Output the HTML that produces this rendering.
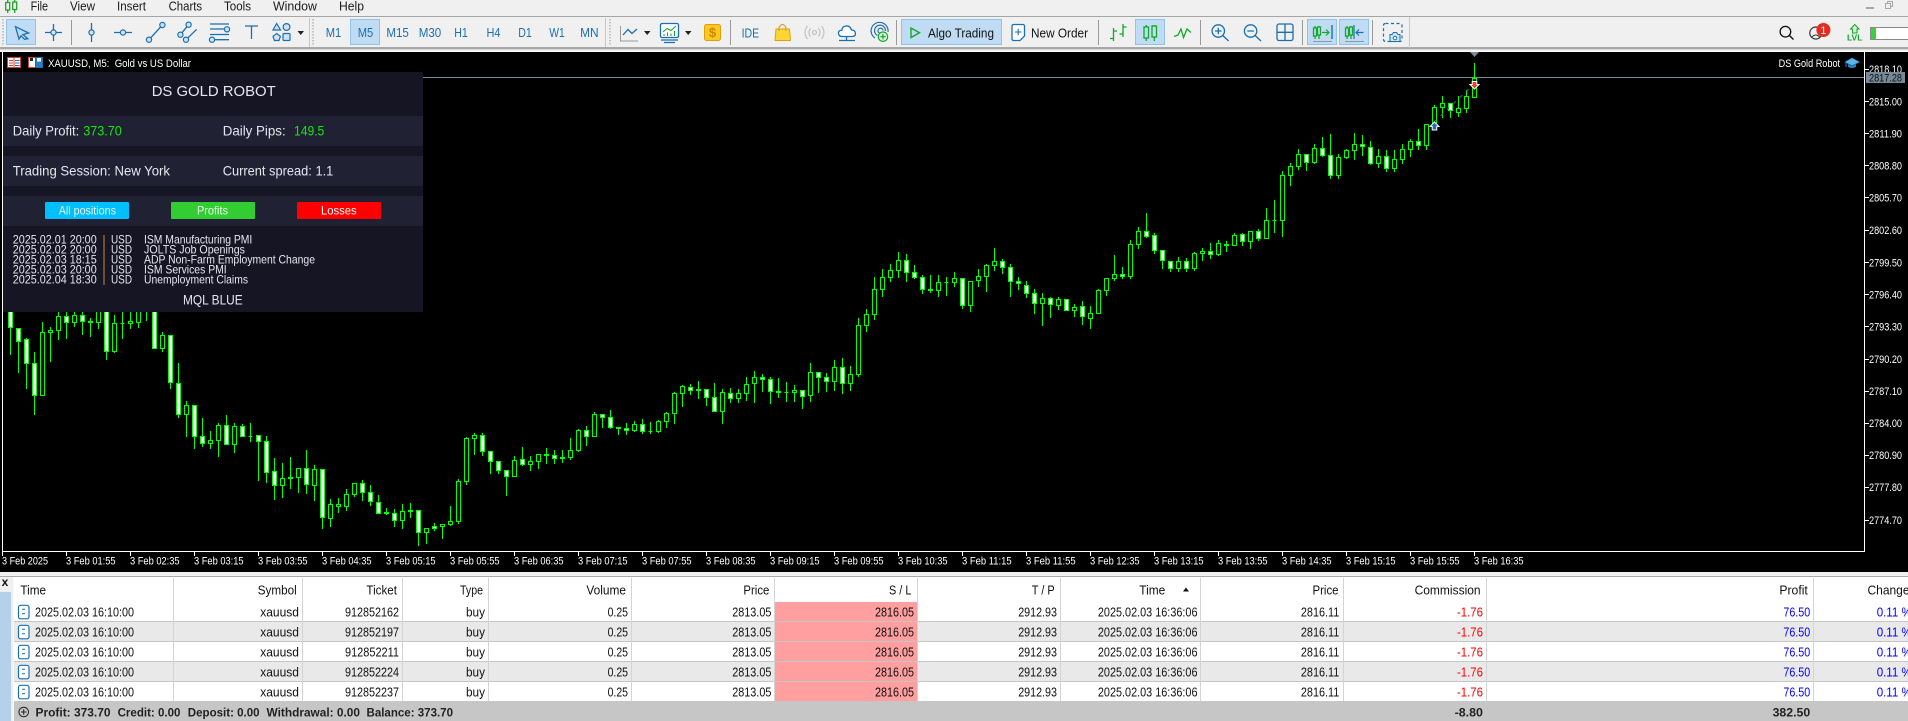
<!DOCTYPE html>
<html><head><meta charset="utf-8"><title>XAUUSD M5</title>
<style>
html,body{margin:0;padding:0;background:#f0f0f0;width:1908px;height:721px;overflow:hidden}
svg{display:block;font-family:"Liberation Sans",sans-serif}
text{white-space:pre}
.m{font-size:13px;fill:#1b6fb0;text-anchor:middle}
.p{font-size:11px;fill:#fff}
.t{font-size:11px;fill:#fff}
.w{font-size:14px;fill:#e6e6f0}
.n{font-size:12px;fill:#e6e6f0}
.c{font-size:13px;fill:#111;text-anchor:end}
.b{font-size:12px;fill:#222;font-weight:700}
.i{fill:none;stroke:#1b6fb0;stroke-width:1.3}
.d{fill:#cfe3f5;stroke:#1b6fb0;stroke-width:1.2}
.g{fill:none;stroke:#12a82a;stroke-width:1.3}
</style></head><body>
<svg width="1908" height="721" viewBox="0 0 1908 721" xmlns="http://www.w3.org/2000/svg">
<rect width="1908" height="721" fill="#f0f0f0"/>
<!-- menu -->
<g fill="none" stroke="#1fa52b" stroke-width="1.3"><path d="M7.7 0V13M14.7 0V13"/><rect x="5.7" y="2.5" width="4" height="7.5" fill="#f0f0f0"/><rect x="12.7" y="2" width="4" height="7.5" fill="#f0f0f0"/></g>
<g font-size="12.5" fill="#1a1a1a">
<text x="30.6" y="10.5" textLength="17.5" lengthAdjust="spacingAndGlyphs">File</text>
<text x="70" y="10.5" textLength="25" lengthAdjust="spacingAndGlyphs">View</text>
<text x="117" y="10.5" textLength="29" lengthAdjust="spacingAndGlyphs">Insert</text>
<text x="168.6" y="10.5" textLength="33.5" lengthAdjust="spacingAndGlyphs">Charts</text>
<text x="224" y="10.5" textLength="27" lengthAdjust="spacingAndGlyphs">Tools</text>
<text x="273" y="10.5" textLength="44" lengthAdjust="spacingAndGlyphs">Window</text>
<text x="339" y="10.5" textLength="25" lengthAdjust="spacingAndGlyphs">Help</text>
</g>
<path d="M1866 8h8" stroke="#a8a8a8" stroke-width="2"/>
<path d="M1885.5 3.5h5v5h-5zM1887.5 3V1.5h5v5H1891" fill="none" stroke="#a8a8a8"/>
<rect y="16" width="1908" height="1" fill="#a6a6a6"/>
<rect y="47" width="1908" height="2" fill="#a8a8a8"/>
<rect y="49" width="1908" height="1" fill="#d8d8d8"/>
<!-- toolbar grips & separators -->
<g stroke="#c4c4c4" stroke-dasharray="1.5 1.5" stroke-width="2" fill="none"><path d="M3 19V46M313 19V46M610 19V46"/></g>
<g fill="#9a9a9a"><rect x="71" y="20" width="1" height="25"/><rect x="309" y="18" width="1" height="29" fill="#c8c8c8"/><rect x="605" y="18" width="1" height="29" fill="#c8c8c8"/><rect x="730" y="20" width="1" height="25"/><rect x="896" y="20" width="1" height="25"/><rect x="1098" y="20" width="1" height="25"/><rect x="1200" y="20" width="1" height="25"/><rect x="1302" y="20" width="1" height="25"/><rect x="1372" y="20" width="1" height="25"/><rect x="1409" y="17" width="1" height="31" fill="#c8c8c8"/></g>
<!-- selected buttons -->
<g fill="#bfdcf4" stroke="#90c4ee"><rect x="6.5" y="19.5" width="29" height="25"/><rect x="350.5" y="19.5" width="29" height="25"/><rect x="901.5" y="19.5" width="100" height="25"/><rect x="1135.5" y="19.5" width="29" height="25"/><rect x="1307.5" y="19.5" width="29" height="25"/><rect x="1339.5" y="19.5" width="29" height="25"/></g>
<!-- drawing tools -->
<path d="M15.5 26.7L28.6 33L23 34.6L27.8 38.7L24.6 39.3L21 35.8L19 39Z" class="i" fill="none"/>
<path d="M45 32.5H62M53.5 24V41" class="i"/><circle cx="53.5" cy="32.5" r="2.6" class="d"/>
<path d="M91.5 23V42" class="i"/><circle cx="91.5" cy="32.5" r="2.6" class="d"/>
<path d="M114 32.5H132" class="i"/><circle cx="123" cy="32.5" r="2.6" class="d"/>
<path d="M149 39.7L162.4 25" class="i"/><circle cx="149" cy="39.7" r="2.6" class="d"/><circle cx="162.4" cy="25" r="2.6" class="d"/>
<path d="M180.4 34.7L188.6 24.7M186 39.7L196.7 29.3" class="i"/><circle cx="180.4" cy="34.7" r="2.6" class="d"/><circle cx="188.6" cy="24.7" r="2.6" class="d"/><circle cx="186" cy="39.7" r="2.6" class="d"/>
<path d="M210 24H229M210 29H226M210 34.5H229M214 39.7H229" class="i"/><circle cx="227" cy="29.3" r="2.6" class="d"/><circle cx="212" cy="39.7" r="2.6" class="d"/>
<path d="M245 26H258M251.5 26V39" class="i"/>
<path d="M276.7 23.5L280.5 30H273Z" class="d"/><circle cx="286.5" cy="27" r="3.4" class="d"/><path d="M276.7 33.5L280.4 36.3L279 40.5H274.4L273 36.3Z" class="d"/><rect x="283" y="33.5" width="7" height="7" rx="1" class="d"/>
<path d="M297.5 31H304L300.8 35Z" fill="#222"/>
<!-- timeframes -->
<text class="m" x="333.5" y="37" textLength="15.5" lengthAdjust="spacingAndGlyphs">M1</text>
<text class="m" x="365.5" y="37" textLength="15.5" lengthAdjust="spacingAndGlyphs">M5</text>
<text class="m" x="397.6" y="37" textLength="22.5" lengthAdjust="spacingAndGlyphs">M15</text>
<text class="m" x="430" y="37" textLength="22.5" lengthAdjust="spacingAndGlyphs">M30</text>
<text class="m" x="461" y="37" textLength="13.5" lengthAdjust="spacingAndGlyphs">H1</text>
<text class="m" x="493.5" y="37" textLength="14" lengthAdjust="spacingAndGlyphs">H4</text>
<text class="m" x="525" y="37" textLength="13.5" lengthAdjust="spacingAndGlyphs">D1</text>
<text class="m" x="557" y="37" textLength="15.5" lengthAdjust="spacingAndGlyphs">W1</text>
<text class="m" x="589.4" y="37" textLength="18.5" lengthAdjust="spacingAndGlyphs">MN</text>
<!-- chart type icons -->
<path d="M620.5 26V41H638" fill="none" stroke="#9a9a9a"/><path d="M623 35L628 29.5L632 33.5L637 29" class="i"/>
<path d="M644 31H650.5L647.2 35Z" fill="#222"/>
<rect x="660.5" y="23.5" width="18" height="14" rx="1.5" fill="#fff" stroke="#1b6fb0" stroke-width="1.3"/>
<path d="M663 32L667 28.5L671 30.5L676 26" fill="none" stroke="#12a82a"/><path d="M664 36V34M667.5 36V32.5M671 36V33.5M674.5 36V31" stroke="#12a82a"/>
<path d="M661 40H678M664 42.5H675" stroke="#1b6fb0" stroke-width="1.2"/>
<path d="M685 31H691.5L688.2 35Z" fill="#222"/>
<rect x="704.5" y="24.5" width="16" height="16" rx="2" fill="#ffc81e" stroke="#dd9f10"/>
<text x="712.5" y="37" font-size="13" font-weight="700" fill="#c98a00" text-anchor="middle">$</text>
<text x="741.6" y="37.4" font-size="13" fill="#1b6fb0" textLength="17.5" lengthAdjust="spacingAndGlyphs">IDE</text>
<path d="M776 29H789.5L790.5 40.5H775Z" fill="#ffd633" stroke="#d9a020"/><path d="M779 31V27.5Q782.5 21.5 786 27.5V31" fill="none" stroke="#d9a020" stroke-width="1.2"/>
<g fill="none" stroke="#c2c2c2" stroke-width="1.2"><circle cx="814.5" cy="32.5" r="2"/><path d="M810.5 28.5a6 6 0 0 0 0 8M818.5 28.5a6 6 0 0 1 0 8M807.5 26a10 10 0 0 0 0 13M821.5 26a10 10 0 0 1 0 13"/></g>
<path d="M842 36.5H852Q856 36.5 855.3 33Q855 30 851.5 30Q850 25.5 846 26Q842 26.5 842 30Q838 30.5 838.5 33.5Q839 36.5 842 36.5ZM846.5 36.5V40.5M839 40.5H855" fill="#fff" stroke="#1b6fb0" stroke-width="1.3"/>
<g fill="none" stroke="#1b6fb0" stroke-width="1.2"><path d="M875 38a8.5 8.5 0 1 1 13-6M877.5 35.5a5.5 5.5 0 1 1 8-4.5M879.5 33a2.5 2.5 0 1 1 3.5-2.5"/></g>
<circle cx="883" cy="36.7" r="4.7" fill="#d9f4dd" stroke="#12a82a" stroke-width="1.2"/><path d="M880.3 36.7H885.7M883 34V39.4" stroke="#12a82a" stroke-width="1.2"/>
<!-- algo / new order -->
<path d="M911 28V37.5L919.5 32.7Z" fill="none" stroke="#12a82a" stroke-width="1.4"/>
<text x="928" y="37.3" font-size="13" fill="#111" textLength="66" lengthAdjust="spacingAndGlyphs">Algo Trading</text>
<path d="M1012 26a1.5 1.5 0 0 1 1.5-1.5H1023a1.5 1.5 0 0 1 1.5 1.5V36L1020 40.5H1013.5a1.5 1.5 0 0 1-1.5-1.5Z" fill="#fff" stroke="#1b6fb0" stroke-width="1.3"/>
<path d="M1015 32H1021.5M1018.2 28.8V35.2" stroke="#1b6fb0" stroke-width="1.1"/>
<text x="1031" y="37.3" font-size="13" fill="#111" textLength="57" lengthAdjust="spacingAndGlyphs">New Order</text>
<!-- chart mode -->
<path d="M1113.5 28V41M1110 38.5H1113.5M1113.5 31H1117M1123 24V37M1119.5 34H1123M1123 27H1126.5" class="g"/>
<path d="M1146.2 25V41M1154.3 25V41" class="g"/><rect x="1144" y="27" width="4.5" height="11" fill="#bfdcf4" class="g" style="fill:#bfdcf4"/><rect x="1152" y="26" width="4.5" height="11" class="g" style="fill:#bfdcf4"/>
<path d="M1174 36.5L1178 35L1181 29L1183.5 37.5L1187 29L1191 32.5" class="g"/>
<!-- zoom, grid -->
<circle cx="1218.3" cy="31" r="6.2" class="i"/><path d="M1222.8 35.5L1228.6 41M1215 31H1221.6M1218.3 27.7V34.3" class="i"/>
<circle cx="1250.6" cy="31" r="6.2" class="i"/><path d="M1255.1 35.5L1261 41M1247.3 31H1253.9" class="i"/>
<rect x="1277" y="24" width="16" height="16.5" rx="2" class="i"/><path d="M1285 24V40.5M1277 32.3H1293" class="i"/>
<!-- shift buttons -->
<path d="M1315 26V39M1319 26V39" class="g"/><rect x="1313.5" y="28" width="3" height="8" class="g" style="fill:#bfdcf4"/><rect x="1317.5" y="27" width="3" height="8" class="g" style="fill:#bfdcf4"/>
<path d="M1322 32.5H1329M1326 29.5L1329 32.5L1326 35.5" fill="none" stroke="#12a82a" stroke-width="1.2"/><path d="M1332 25V39" stroke="#1b6fb0" stroke-width="1.4"/><path d="M1313 41.5H1332" stroke="#8a9aa8"/>
<path d="M1347 26V39M1351 26V39" class="g"/><rect x="1345.5" y="28" width="3" height="8" class="g" style="fill:#bfdcf4"/><rect x="1349.5" y="27" width="3" height="8" class="g" style="fill:#bfdcf4"/>
<path d="M1354 25V39" stroke="#1b6fb0" stroke-width="1.2"/><path d="M1356 32.5H1363.5M1359 29.5L1356 32.5L1359 35.5" fill="none" stroke="#1b6fb0" stroke-width="1.2"/><path d="M1345 41.5H1364" stroke="#8a9aa8"/>
<!-- screenshot -->
<rect x="1383.5" y="23.5" width="18.5" height="18" rx="2" fill="none" stroke="#1b6fb0" stroke-width="1.2" stroke-dasharray="3 2.5"/>
<path d="M1390 34.5h2l1.5-2h3l1.5 2h2v7h-10z" fill="#d3e6f5" stroke="#1b6fb0"/><circle cx="1395" cy="38" r="1.8" fill="#fff" stroke="#1b6fb0"/>
<!-- right status -->
<circle cx="1785.4" cy="31.7" r="5.3" fill="none" stroke="#111" stroke-width="1.3"/><path d="M1789.4 35.5L1793.5 39.5" stroke="#111" stroke-width="1.4"/>
<circle cx="1815.8" cy="33" r="6" fill="none" stroke="#333" stroke-width="1.2"/><path d="M1811.5 37.5Q1815.8 32.5 1820 37.5" fill="none" stroke="#333"/>
<circle cx="1823.4" cy="30" r="7" fill="#e62a1e"/><text x="1823.4" y="34" font-size="11" fill="#fff" text-anchor="middle">1</text>
<path d="M1854.7 24.5L1859 29H1857V33H1852.5V29H1850.5Z" fill="#d0f0d0" stroke="#12a82a"/>
<text x="1854.7" y="40.5" font-size="8.5" fill="#12a82a" text-anchor="middle" font-weight="700">LVL</text>
<rect x="1870.5" y="27.5" width="40" height="12" fill="#fff" stroke="#8a8a8a"/><rect x="1871" y="28" width="5" height="11" fill="#3ecf3e"/>

<!-- chart -->
<rect y="51" width="1908" height="521" fill="#000"/>
<rect y="51" width="1908" height="1" fill="#fff"/>
<rect x="2" y="51" width="1" height="501" fill="#fff"/>
<rect x="2" y="551" width="1862" height="1" fill="#fff"/>
<rect x="1864" y="51" width="1" height="501" fill="#fff"/>
<rect x="3" y="77" width="1861" height="1" fill="#778899"/>
<path d="M1470 52H1479L1474.5 57Z" fill="#778899"/>
<!-- candles -->
<path fill="none" stroke="#0f0" stroke-width="1" d="M10.5 300V355M18.5 328V373M26.5 338V389M34.5 352V415M42.5 322V396M50.5 327V362M58.5 305V340M66.5 305V339M74.5 308V327M82.5 310V335M90.5 318V337M98.5 305V329M106.5 300V360M114.5 315V353M122.5 305V339M130.5 305V329M138.5 305V328M146.5 305V321M154.5 300V349M162.5 332V352M170.5 335V389M178.5 363V418M186.5 401V437M194.5 405V449M202.5 418V447M210.5 431V449M218.5 423V457M226.5 415V445M234.5 423V453M242.5 424V437M250.5 423V442M258.5 435V481M266.5 436V483M274.5 458V500M282.5 463V498M290.5 457V489M298.5 468V493M306.5 450V494M314.5 465V501M322.5 469V529M330.5 499V527M338.5 498V513M346.5 489V511M354.5 483V497M362.5 480V501M370.5 485V506M378.5 495V514M386.5 508V515M394.5 509V527M402.5 504V529M410.5 503V518M418.5 510V546M426.5 528V544M434.5 523V531M442.5 524V539M450.5 506V526M458.5 479V524M466.5 437V485M474.5 433V455M482.5 433V456M490.5 451V474M498.5 461V474M506.5 470V496M514.5 456V477M522.5 447V466M530.5 456V471M538.5 454V469M546.5 448V464M554.5 450V464M562.5 450V463M570.5 438V460M578.5 429V452M586.5 426V446M594.5 412V437M602.5 414V428M610.5 410V429M618.5 427V435M626.5 423V435M634.5 421V432M642.5 419V434M650.5 422V434M658.5 420V433M666.5 412V428M674.5 392V424M682.5 385V407M690.5 384V395M698.5 381V399M706.5 389V406M714.5 383V412M722.5 389V424M730.5 388V403M738.5 389V403M746.5 377V401M754.5 371V403M762.5 374V392M770.5 377V404M778.5 378V398M786.5 382V402M794.5 385V402M802.5 390V409M810.5 363V402M818.5 372V393M826.5 373V392M834.5 360V391M842.5 358V394M850.5 366V391M858.5 318V377M866.5 309V332M874.5 277V320M882.5 269V297M890.5 264V282M898.5 252V278M906.5 254V282M914.5 265V279M922.5 275V294M930.5 275V293M938.5 275V297M946.5 277V296M954.5 272V287M962.5 278V309M970.5 281V312M978.5 269V287M986.5 264V292M994.5 248V271M1002.5 259V274M1010.5 264V297M1018.5 277V290M1026.5 281V298M1034.5 289V314M1042.5 293V326M1050.5 297V318M1058.5 297V310M1066.5 299V311M1074.5 304V317M1082.5 301V325M1090.5 306V329M1098.5 289V314M1106.5 278V296M1114.5 255V281M1122.5 267V279M1130.5 240V279M1138.5 227V249M1146.5 213V238M1154.5 233V254M1162.5 250V269M1170.5 261V272M1178.5 257V272M1186.5 258V272M1194.5 252V271M1202.5 248V261M1210.5 243V259M1218.5 240V256M1226.5 241V252M1234.5 233V246M1242.5 233V246M1250.5 231V249M1258.5 229V241M1266.5 208V239M1274.5 200V233M1282.5 171V237M1290.5 163V186M1298.5 149V170M1306.5 154V171M1314.5 144V164M1322.5 137V157M1330.5 134V179M1338.5 154V179M1346.5 149V159M1354.5 133V160M1362.5 135V156M1370.5 141V165M1378.5 149V168M1386.5 150V172M1394.5 150V172M1402.5 144V164M1410.5 139V157M1418.5 129V150M1426.5 124V150M1434.5 105V125M1442.5 96V118M1450.5 103V118M1458.5 96V117M1466.5 90V113M1474.5 63V98"/>
<path fill="#000" stroke="#0f0" stroke-width="1" d="M40.5 332.5h4v63h-4zM48.5 330.5h4v2h-4zM56.5 316.5h4v14h-4zM72.5 315.5h4v7h-4zM88.5 321.5h4v1h-4zM96.5 305.5h4v17h-4zM112.5 323.5h4v28h-4zM120.5 323.5h4v0h-4zM128.5 321.5h4v2h-4zM136.5 305.5h4v17h-4zM160.5 335.5h4v13h-4zM184.5 405.5h4v9h-4zM208.5 440.5h4v3h-4zM216.5 425.5h4v15h-4zM232.5 426.5h4v18h-4zM248.5 436.5h4v0h-4zM280.5 478.5h4v7h-4zM288.5 477.5h4v1h-4zM296.5 468.5h4v9h-4zM312.5 469.5h4v16h-4zM328.5 504.5h4v14h-4zM336.5 504.5h4v2h-4zM344.5 494.5h4v12h-4zM352.5 483.5h4v11h-4zM384.5 512.5h4v1h-4zM400.5 511.5h4v9h-4zM408.5 510.5h4v1h-4zM424.5 528.5h4v4h-4zM440.5 524.5h4v2h-4zM448.5 521.5h4v3h-4zM456.5 481.5h4v40h-4zM464.5 438.5h4v43h-4zM472.5 435.5h4v3h-4zM512.5 460.5h4v16h-4zM528.5 461.5h4v3h-4zM536.5 454.5h4v7h-4zM544.5 454.5h4v1h-4zM560.5 457.5h4v1h-4zM568.5 450.5h4v7h-4zM576.5 430.5h4v20h-4zM592.5 414.5h4v22h-4zM616.5 427.5h4v1h-4zM632.5 424.5h4v6h-4zM648.5 431.5h4v0h-4zM656.5 421.5h4v10h-4zM664.5 413.5h4v8h-4zM672.5 393.5h4v20h-4zM680.5 386.5h4v7h-4zM696.5 389.5h4v1h-4zM720.5 392.5h4v19h-4zM736.5 393.5h4v5h-4zM744.5 384.5h4v9h-4zM752.5 377.5h4v6h-4zM776.5 391.5h4v1h-4zM784.5 392.5h4v0h-4zM792.5 390.5h4v2h-4zM808.5 372.5h4v23h-4zM832.5 367.5h4v14h-4zM848.5 374.5h4v9h-4zM856.5 325.5h4v49h-4zM864.5 314.5h4v11h-4zM872.5 289.5h4v25h-4zM880.5 277.5h4v12h-4zM888.5 270.5h4v7h-4zM896.5 260.5h4v10h-4zM928.5 289.5h4v1h-4zM936.5 282.5h4v8h-4zM944.5 282.5h4v0h-4zM952.5 278.5h4v4h-4zM968.5 281.5h4v24h-4zM976.5 276.5h4v4h-4zM984.5 265.5h4v11h-4zM992.5 261.5h4v4h-4zM1040.5 298.5h4v5h-4zM1056.5 299.5h4v6h-4zM1072.5 307.5h4v3h-4zM1088.5 313.5h4v5h-4zM1096.5 290.5h4v23h-4zM1104.5 278.5h4v12h-4zM1112.5 274.5h4v4h-4zM1128.5 244.5h4v32h-4zM1136.5 231.5h4v13h-4zM1176.5 261.5h4v7h-4zM1192.5 253.5h4v15h-4zM1200.5 251.5h4v2h-4zM1216.5 243.5h4v11h-4zM1224.5 244.5h4v1h-4zM1232.5 235.5h4v10h-4zM1248.5 231.5h4v10h-4zM1264.5 220.5h4v18h-4zM1272.5 220.5h4v0h-4zM1280.5 175.5h4v45h-4zM1288.5 166.5h4v9h-4zM1296.5 154.5h4v12h-4zM1312.5 148.5h4v14h-4zM1336.5 157.5h4v18h-4zM1344.5 150.5h4v7h-4zM1352.5 144.5h4v6h-4zM1376.5 156.5h4v7h-4zM1392.5 159.5h4v9h-4zM1400.5 149.5h4v10h-4zM1408.5 141.5h4v8h-4zM1424.5 124.5h4v21h-4zM1432.5 107.5h4v17h-4zM1440.5 103.5h4v4h-4zM1456.5 108.5h4v4h-4zM1464.5 96.5h4v12h-4zM1472.5 78.5h4v19h-4z"/>
<path fill="#fff" stroke="#0f0" stroke-width="1" d="M8.5 300.5h4v27h-4zM16.5 328.5h4v13h-4zM24.5 339.5h4v24h-4zM32.5 363.5h4v32h-4zM64.5 316.5h4v6h-4zM80.5 315.5h4v6h-4zM104.5 300.5h4v51h-4zM152.5 300.5h4v48h-4zM168.5 335.5h4v47h-4zM176.5 383.5h4v31h-4zM192.5 405.5h4v31h-4zM200.5 436.5h4v7h-4zM224.5 425.5h4v19h-4zM240.5 426.5h4v10h-4zM256.5 435.5h4v6h-4zM264.5 441.5h4v31h-4zM272.5 471.5h4v14h-4zM304.5 468.5h4v16h-4zM320.5 469.5h4v48h-4zM360.5 483.5h4v9h-4zM368.5 492.5h4v9h-4zM376.5 502.5h4v11h-4zM392.5 513.5h4v7h-4zM416.5 510.5h4v22h-4zM432.5 526.5h4v2h-4zM480.5 435.5h4v16h-4zM488.5 451.5h4v10h-4zM496.5 461.5h4v9h-4zM504.5 470.5h4v6h-4zM520.5 459.5h4v5h-4zM552.5 455.5h4v3h-4zM584.5 430.5h4v6h-4zM600.5 414.5h4v3h-4zM608.5 417.5h4v10h-4zM624.5 428.5h4v2h-4zM640.5 424.5h4v7h-4zM688.5 387.5h4v3h-4zM704.5 389.5h4v8h-4zM712.5 397.5h4v14h-4zM728.5 393.5h4v5h-4zM760.5 377.5h4v2h-4zM768.5 379.5h4v12h-4zM800.5 390.5h4v6h-4zM816.5 372.5h4v5h-4zM824.5 377.5h4v4h-4zM840.5 367.5h4v16h-4zM904.5 260.5h4v12h-4zM912.5 272.5h4v5h-4zM920.5 277.5h4v12h-4zM960.5 278.5h4v27h-4zM1000.5 261.5h4v6h-4zM1008.5 267.5h4v14h-4zM1016.5 281.5h4v2h-4zM1024.5 285.5h4v8h-4zM1032.5 293.5h4v10h-4zM1048.5 298.5h4v6h-4zM1064.5 299.5h4v11h-4zM1080.5 306.5h4v10h-4zM1120.5 274.5h4v2h-4zM1144.5 231.5h4v5h-4zM1152.5 235.5h4v15h-4zM1160.5 250.5h4v10h-4zM1168.5 261.5h4v7h-4zM1184.5 261.5h4v7h-4zM1208.5 251.5h4v3h-4zM1240.5 234.5h4v7h-4zM1256.5 231.5h4v7h-4zM1304.5 154.5h4v8h-4zM1320.5 148.5h4v7h-4zM1328.5 155.5h4v20h-4zM1360.5 144.5h4v2h-4zM1368.5 147.5h4v16h-4zM1384.5 156.5h4v12h-4zM1416.5 141.5h4v4h-4zM1448.5 103.5h4v7h-4z"/>
<path d="M1434 122L1474 84" fill="none" stroke="#1b6fb0" stroke-dasharray="3 6"/>
<path d="M1434.5 122L1439 126.5H1436.8V130H1432.2V126.5H1430Z" fill="#1b6fb0" stroke="#fff"/>
<path d="M1474.5 89L1470 84.5H1472.2V81.5H1476.8V84.5H1479Z" fill="#e8402a" stroke="#fff"/>
<!-- title -->
<rect x="7.5" y="57.5" width="13" height="10" fill="#fff" stroke="#d8402e"/><path d="M14 58V67M9 60.5H13M9 63H13M9 65.5H13" stroke="#d8402e"/><path d="M15 60.5H19.5M15 63H19.5M15 65.5H19.5" stroke="#1b6fb0"/>
<rect x="28.5" y="57.5" width="7" height="10" fill="#fff" stroke="#d8402e"/><rect x="35.5" y="57.5" width="7" height="10" fill="#2a7fc0" stroke="#1b6fb0"/><rect x="37" y="58" width="4" height="3.5" fill="#fff"/><rect x="30" y="58" width="3" height="3" fill="#222"/>
<text class="t" x="48" y="66.8" textLength="143" lengthAdjust="spacingAndGlyphs">XAUUSD, M5:  Gold vs US Dollar</text>
<text class="t" x="1778.6" y="66.8" textLength="61.5" lengthAdjust="spacingAndGlyphs">DS Gold Robot</text>
<path d="M1845 62L1852 58L1859.5 62L1852 65.5Z" fill="#5fb4e8" stroke="#2a7fc0" stroke-width=".6"/><path d="M1848 64V67Q1852 69 1856 67V64L1852 66Z" fill="#2a7fc0"/><path d="M1846 62.5V67" stroke="#2a7fc0"/>
<!-- price axis -->
<g fill="#fff"><rect x="1865" y="69" width="4" height="1"/><rect x="1865" y="101" width="4" height="1"/><rect x="1865" y="133" width="4" height="1"/><rect x="1865" y="165" width="4" height="1"/><rect x="1865" y="197" width="4" height="1"/><rect x="1865" y="230" width="4" height="1"/><rect x="1865" y="262" width="4" height="1"/><rect x="1865" y="294" width="4" height="1"/><rect x="1865" y="326" width="4" height="1"/><rect x="1865" y="359" width="4" height="1"/><rect x="1865" y="391" width="4" height="1"/><rect x="1865" y="423" width="4" height="1"/><rect x="1865" y="455" width="4" height="1"/><rect x="1865" y="487" width="4" height="1"/><rect x="1865" y="520" width="4" height="1"/></g>
<text class="p" x="1869" y="73" textLength="33" lengthAdjust="spacingAndGlyphs">2818.10</text>
<text class="p" x="1869" y="105.5" textLength="33" lengthAdjust="spacingAndGlyphs">2815.00</text>
<text class="p" x="1869" y="137.5" textLength="33" lengthAdjust="spacingAndGlyphs">2811.90</text>
<text class="p" x="1869" y="169.5" textLength="33" lengthAdjust="spacingAndGlyphs">2808.80</text>
<text class="p" x="1869" y="201.5" textLength="33" lengthAdjust="spacingAndGlyphs">2805.70</text>
<text class="p" x="1869" y="234" textLength="33" lengthAdjust="spacingAndGlyphs">2802.60</text>
<text class="p" x="1869" y="266.5" textLength="33" lengthAdjust="spacingAndGlyphs">2799.50</text>
<text class="p" x="1869" y="298.5" textLength="33" lengthAdjust="spacingAndGlyphs">2796.40</text>
<text class="p" x="1869" y="330.5" textLength="33" lengthAdjust="spacingAndGlyphs">2793.30</text>
<text class="p" x="1869" y="363" textLength="33" lengthAdjust="spacingAndGlyphs">2790.20</text>
<text class="p" x="1869" y="395" textLength="33" lengthAdjust="spacingAndGlyphs">2787.10</text>
<text class="p" x="1869" y="427" textLength="33" lengthAdjust="spacingAndGlyphs">2784.00</text>
<text class="p" x="1869" y="459" textLength="33" lengthAdjust="spacingAndGlyphs">2780.90</text>
<text class="p" x="1869" y="491" textLength="33" lengthAdjust="spacingAndGlyphs">2777.80</text>
<text class="p" x="1869" y="524" textLength="33" lengthAdjust="spacingAndGlyphs">2774.70</text>
<rect x="1866" y="72" width="39" height="11" fill="#778899"/>
<text class="p" x="1869" y="81.3" style="fill:#101010" textLength="33" lengthAdjust="spacingAndGlyphs">2817.28</text>
<!-- time axis -->
<path stroke="#fff" d="M2.5 552V556M66.5 552V556M130.5 552V556M194.5 552V556M258.5 552V556M322.5 552V556M386.5 552V556M450.5 552V556M514.5 552V556M578.5 552V556M642.5 552V556M706.5 552V556M770.5 552V556M834.5 552V556M898.5 552V556M962.5 552V556M1026.5 552V556M1090.5 552V556M1154.5 552V556M1218.5 552V556M1282.5 552V556M1346.5 552V556M1410.5 552V556M1474.5 552V556"/>
<text class="t" x="2" y="564.5" textLength="46" lengthAdjust="spacingAndGlyphs">3 Feb 2025</text>
<text class="t" x="66" y="564.5" textLength="49.6" lengthAdjust="spacingAndGlyphs">3 Feb 01:55</text>
<text class="t" x="130" y="564.5" textLength="49.6" lengthAdjust="spacingAndGlyphs">3 Feb 02:35</text>
<text class="t" x="194" y="564.5" textLength="49.6" lengthAdjust="spacingAndGlyphs">3 Feb 03:15</text>
<text class="t" x="258" y="564.5" textLength="49.6" lengthAdjust="spacingAndGlyphs">3 Feb 03:55</text>
<text class="t" x="322" y="564.5" textLength="49.6" lengthAdjust="spacingAndGlyphs">3 Feb 04:35</text>
<text class="t" x="386" y="564.5" textLength="49.6" lengthAdjust="spacingAndGlyphs">3 Feb 05:15</text>
<text class="t" x="450" y="564.5" textLength="49.6" lengthAdjust="spacingAndGlyphs">3 Feb 05:55</text>
<text class="t" x="514" y="564.5" textLength="49.6" lengthAdjust="spacingAndGlyphs">3 Feb 06:35</text>
<text class="t" x="578" y="564.5" textLength="49.6" lengthAdjust="spacingAndGlyphs">3 Feb 07:15</text>
<text class="t" x="642" y="564.5" textLength="49.6" lengthAdjust="spacingAndGlyphs">3 Feb 07:55</text>
<text class="t" x="706" y="564.5" textLength="49.6" lengthAdjust="spacingAndGlyphs">3 Feb 08:35</text>
<text class="t" x="770" y="564.5" textLength="49.6" lengthAdjust="spacingAndGlyphs">3 Feb 09:15</text>
<text class="t" x="834" y="564.5" textLength="49.6" lengthAdjust="spacingAndGlyphs">3 Feb 09:55</text>
<text class="t" x="898" y="564.5" textLength="49.6" lengthAdjust="spacingAndGlyphs">3 Feb 10:35</text>
<text class="t" x="962" y="564.5" textLength="49.6" lengthAdjust="spacingAndGlyphs">3 Feb 11:15</text>
<text class="t" x="1026" y="564.5" textLength="49.6" lengthAdjust="spacingAndGlyphs">3 Feb 11:55</text>
<text class="t" x="1090" y="564.5" textLength="49.6" lengthAdjust="spacingAndGlyphs">3 Feb 12:35</text>
<text class="t" x="1154" y="564.5" textLength="49.6" lengthAdjust="spacingAndGlyphs">3 Feb 13:15</text>
<text class="t" x="1218" y="564.5" textLength="49.6" lengthAdjust="spacingAndGlyphs">3 Feb 13:55</text>
<text class="t" x="1282" y="564.5" textLength="49.6" lengthAdjust="spacingAndGlyphs">3 Feb 14:35</text>
<text class="t" x="1346" y="564.5" textLength="49.6" lengthAdjust="spacingAndGlyphs">3 Feb 15:15</text>
<text class="t" x="1410" y="564.5" textLength="49.6" lengthAdjust="spacingAndGlyphs">3 Feb 15:55</text>
<text class="t" x="1474" y="564.5" textLength="49.6" lengthAdjust="spacingAndGlyphs">3 Feb 16:35</text>

<!-- panel -->
<rect x="3" y="72" width="420" height="240" fill="#151524"/>
<rect x="3" y="116" width="420" height="30" fill="#202132"/>
<rect x="3" y="156" width="420" height="30" fill="#202132"/>
<rect x="3" y="196" width="420" height="30" fill="#202132"/>
<text x="151.7" y="96" font-size="15" fill="#e6e6f0" textLength="124" lengthAdjust="spacingAndGlyphs">DS GOLD ROBOT</text>
<text class="w" x="12.7" y="135.3" textLength="66.6" lengthAdjust="spacingAndGlyphs">Daily Profit:</text>
<text class="w" x="83.3" y="135.3" style="fill:#14e614" textLength="38.4" lengthAdjust="spacingAndGlyphs">373.70</text>
<text class="w" x="222.7" y="135.3" textLength="63" lengthAdjust="spacingAndGlyphs">Daily Pips:</text>
<text class="w" x="294" y="135.3" style="fill:#14e614" textLength="30.3" lengthAdjust="spacingAndGlyphs">149.5</text>
<text class="w" x="12.7" y="175.3" textLength="157.3" lengthAdjust="spacingAndGlyphs">Trading Session: New York</text>
<text class="w" x="222.7" y="175.3" textLength="110.6" lengthAdjust="spacingAndGlyphs">Current spread: 1.1</text>
<rect x="45" y="202" width="84" height="17" rx="1" fill="#00bfff"/>
<rect x="171" y="202" width="84" height="17" rx="1" fill="#32cd32"/>
<rect x="297" y="202" width="84" height="17" rx="1" fill="#f00"/>
<text x="58.7" y="214.3" font-size="12" fill="#eaf6ff" textLength="57.3" lengthAdjust="spacingAndGlyphs">All positions</text>
<text x="197" y="214.3" font-size="12" fill="#eaffea" textLength="31" lengthAdjust="spacingAndGlyphs">Profits</text>
<text x="321" y="214.3" font-size="12" fill="#fff" textLength="35.7" lengthAdjust="spacingAndGlyphs">Losses</text>
<rect x="103.5" y="235" width="1" height="50" fill="#cd853f"/>
<text class="n" x="12.7" y="243.5" textLength="84" lengthAdjust="spacingAndGlyphs">2025.02.01 20:00</text>
<text class="n" x="12.7" y="253.5" textLength="84" lengthAdjust="spacingAndGlyphs">2025.02.02 20:00</text>
<text class="n" x="12.7" y="263.5" textLength="84" lengthAdjust="spacingAndGlyphs">2025.02.03 18:15</text>
<text class="n" x="12.7" y="273.5" textLength="84" lengthAdjust="spacingAndGlyphs">2025.02.03 20:00</text>
<text class="n" x="12.7" y="283.5" textLength="84" lengthAdjust="spacingAndGlyphs">2025.02.04 18:30</text>
<text class="n" x="111" y="243.5" textLength="21" lengthAdjust="spacingAndGlyphs">USD</text>
<text class="n" x="111" y="253.5" textLength="21" lengthAdjust="spacingAndGlyphs">USD</text>
<text class="n" x="111" y="263.5" textLength="21" lengthAdjust="spacingAndGlyphs">USD</text>
<text class="n" x="111" y="273.5" textLength="21" lengthAdjust="spacingAndGlyphs">USD</text>
<text class="n" x="111" y="283.5" textLength="21" lengthAdjust="spacingAndGlyphs">USD</text>
<text class="n" x="144" y="243.5" textLength="108.3" lengthAdjust="spacingAndGlyphs">ISM Manufacturing PMI</text>
<text class="n" x="144" y="253.5" textLength="101" lengthAdjust="spacingAndGlyphs">JOLTS Job Openings</text>
<text class="n" x="144" y="263.5" textLength="171" lengthAdjust="spacingAndGlyphs">ADP Non-Farm Employment Change</text>
<text class="n" x="144" y="273.5" textLength="82.7" lengthAdjust="spacingAndGlyphs">ISM Services PMI</text>
<text class="n" x="144" y="283.5" textLength="104" lengthAdjust="spacingAndGlyphs">Unemployment Claims</text>
<text x="183" y="304.6" font-size="14" fill="#e6e6f0" textLength="59.7" lengthAdjust="spacingAndGlyphs">MQL BLUE</text>

<!-- bottom panel -->
<rect y="576" width="1908" height="1" fill="#a8a8a8"/>
<text x="5" y="586" font-size="12" font-weight="700" fill="#111" text-anchor="middle">x</text>
<rect y="592" width="11" height="129" fill="#b5d0ea"/>
<rect x="13.5" y="577" width="1895" height="144" fill="#fff"/>
<rect x="14" y="621" width="1894" height="20" fill="#e9e9e9"/>
<rect x="14" y="661" width="1894" height="20" fill="#e9e9e9"/>
<rect x="775" y="602" width="143" height="99" fill="#ff9f9f"/>
<g fill="#c6c6c6"><rect x="14" y="621" width="1894" height="1"/><rect x="14" y="641" width="1894" height="1"/><rect x="14" y="661" width="1894" height="1"/><rect x="14" y="681" width="1894" height="1"/></g>
<g fill="#d4d4d4"><rect x="173" y="578" width="1" height="123"/><rect x="302" y="578" width="1" height="123"/><rect x="402" y="578" width="1" height="123"/><rect x="488" y="578" width="1" height="123"/><rect x="631" y="578" width="1" height="123"/><rect x="774" y="578" width="1" height="123"/><rect x="917" y="578" width="1" height="123"/><rect x="1060" y="578" width="1" height="123"/><rect x="1200" y="578" width="1" height="123"/><rect x="1343" y="578" width="1" height="123"/><rect x="1486" y="578" width="1" height="123"/><rect x="1813" y="578" width="1" height="123"/></g>
<rect x="14" y="701" width="1894" height="20" fill="#c6c6c6"/>
<!-- header -->
<g>
<text x="20.4" y="594.5" font-size="13" fill="#111" textLength="25.7" lengthAdjust="spacingAndGlyphs">Time</text>
<text class="c" x="296.7" y="594.5" textLength="39" lengthAdjust="spacingAndGlyphs">Symbol</text>
<text class="c" x="397" y="594.5" textLength="30.6" lengthAdjust="spacingAndGlyphs">Ticket</text>
<text class="c" x="483" y="594.5" textLength="23" lengthAdjust="spacingAndGlyphs">Type</text>
<text class="c" x="626" y="594.5" textLength="39.6" lengthAdjust="spacingAndGlyphs">Volume</text>
<text class="c" x="769.4" y="594.5" textLength="26" lengthAdjust="spacingAndGlyphs">Price</text>
<text class="c" x="911.4" y="594.5" textLength="22.4" lengthAdjust="spacingAndGlyphs">S / L</text>
<text class="c" x="1054.7" y="594.5" textLength="22.9" lengthAdjust="spacingAndGlyphs">T / P</text>
<text class="c" x="1165.3" y="594.5" textLength="26" lengthAdjust="spacingAndGlyphs">Time</text>
<path d="M1183 591.5H1189L1186 587.5Z" fill="#111"/>
<text class="c" x="1338.5" y="594.5" textLength="26" lengthAdjust="spacingAndGlyphs">Price</text>
<text class="c" x="1480.6" y="594.5" textLength="66" lengthAdjust="spacingAndGlyphs">Commission</text>
<text class="c" x="1807.8" y="594.5" textLength="28.4" lengthAdjust="spacingAndGlyphs">Profit</text>
<text x="1867.5" y="594.5" font-size="13" fill="#111" textLength="42" lengthAdjust="spacingAndGlyphs">Change</text>
</g>
<!-- rows -->
<g transform="translate(0,616.3)">
<rect x="18.5" y="-11" width="10.5" height="13.5" rx="2" fill="#fff" stroke="#1b6fb0" stroke-width="1.2"/><path d="M22 -7H25M22 -2.5H25" stroke="#1b6fb0"/>
<text x="35" font-size="13" fill="#111" textLength="99" lengthAdjust="spacingAndGlyphs">2025.02.03 16:10:00</text>
<text class="c" x="299" textLength="38.8" lengthAdjust="spacingAndGlyphs">xauusd</text><text class="c" x="399" textLength="54" lengthAdjust="spacingAndGlyphs">912852162</text><text class="c" x="485" textLength="19" lengthAdjust="spacingAndGlyphs">buy</text><text class="c" x="628" textLength="20.4" lengthAdjust="spacingAndGlyphs">0.25</text><text class="c" x="771.4" textLength="39.2" lengthAdjust="spacingAndGlyphs">2813.05</text><text class="c" x="914" textLength="39" lengthAdjust="spacingAndGlyphs">2816.05</text><text class="c" x="1057" textLength="38.8" lengthAdjust="spacingAndGlyphs">2912.93</text><text class="c" x="1197.5" textLength="99.6" lengthAdjust="spacingAndGlyphs">2025.02.03 16:36:06</text><text class="c" x="1339.3" textLength="38.4" lengthAdjust="spacingAndGlyphs">2816.11</text><text class="c" x="1483" style="fill:#f00" textLength="26" lengthAdjust="spacingAndGlyphs">-1.76</text><text class="c" x="1810.2" style="fill:#00f" textLength="26.8" lengthAdjust="spacingAndGlyphs">76.50</text><text x="1876.7" font-size="13" fill="#00f" textLength="35" lengthAdjust="spacingAndGlyphs">0.11 %</text>
</g>
<g transform="translate(0,636.3)">
<rect x="18.5" y="-11" width="10.5" height="13.5" rx="2" fill="#fff" stroke="#1b6fb0" stroke-width="1.2"/><path d="M22 -7H25M22 -2.5H25" stroke="#1b6fb0"/>
<text x="35" font-size="13" fill="#111" textLength="99" lengthAdjust="spacingAndGlyphs">2025.02.03 16:10:00</text>
<text class="c" x="299" textLength="38.8" lengthAdjust="spacingAndGlyphs">xauusd</text><text class="c" x="399" textLength="54" lengthAdjust="spacingAndGlyphs">912852197</text><text class="c" x="485" textLength="19" lengthAdjust="spacingAndGlyphs">buy</text><text class="c" x="628" textLength="20.4" lengthAdjust="spacingAndGlyphs">0.25</text><text class="c" x="771.4" textLength="39.2" lengthAdjust="spacingAndGlyphs">2813.05</text><text class="c" x="914" textLength="39" lengthAdjust="spacingAndGlyphs">2816.05</text><text class="c" x="1057" textLength="38.8" lengthAdjust="spacingAndGlyphs">2912.93</text><text class="c" x="1197.5" textLength="99.6" lengthAdjust="spacingAndGlyphs">2025.02.03 16:36:06</text><text class="c" x="1339.3" textLength="38.4" lengthAdjust="spacingAndGlyphs">2816.11</text><text class="c" x="1483" style="fill:#f00" textLength="26" lengthAdjust="spacingAndGlyphs">-1.76</text><text class="c" x="1810.2" style="fill:#00f" textLength="26.8" lengthAdjust="spacingAndGlyphs">76.50</text><text x="1876.7" font-size="13" fill="#00f" textLength="35" lengthAdjust="spacingAndGlyphs">0.11 %</text>
</g>
<g transform="translate(0,656.3)">
<rect x="18.5" y="-11" width="10.5" height="13.5" rx="2" fill="#fff" stroke="#1b6fb0" stroke-width="1.2"/><path d="M22 -7H25M22 -2.5H25" stroke="#1b6fb0"/>
<text x="35" font-size="13" fill="#111" textLength="99" lengthAdjust="spacingAndGlyphs">2025.02.03 16:10:00</text>
<text class="c" x="299" textLength="38.8" lengthAdjust="spacingAndGlyphs">xauusd</text><text class="c" x="399" textLength="54" lengthAdjust="spacingAndGlyphs">912852211</text><text class="c" x="485" textLength="19" lengthAdjust="spacingAndGlyphs">buy</text><text class="c" x="628" textLength="20.4" lengthAdjust="spacingAndGlyphs">0.25</text><text class="c" x="771.4" textLength="39.2" lengthAdjust="spacingAndGlyphs">2813.05</text><text class="c" x="914" textLength="39" lengthAdjust="spacingAndGlyphs">2816.05</text><text class="c" x="1057" textLength="38.8" lengthAdjust="spacingAndGlyphs">2912.93</text><text class="c" x="1197.5" textLength="99.6" lengthAdjust="spacingAndGlyphs">2025.02.03 16:36:06</text><text class="c" x="1339.3" textLength="38.4" lengthAdjust="spacingAndGlyphs">2816.11</text><text class="c" x="1483" style="fill:#f00" textLength="26" lengthAdjust="spacingAndGlyphs">-1.76</text><text class="c" x="1810.2" style="fill:#00f" textLength="26.8" lengthAdjust="spacingAndGlyphs">76.50</text><text x="1876.7" font-size="13" fill="#00f" textLength="35" lengthAdjust="spacingAndGlyphs">0.11 %</text>
</g>
<g transform="translate(0,676.3)">
<rect x="18.5" y="-11" width="10.5" height="13.5" rx="2" fill="#fff" stroke="#1b6fb0" stroke-width="1.2"/><path d="M22 -7H25M22 -2.5H25" stroke="#1b6fb0"/>
<text x="35" font-size="13" fill="#111" textLength="99" lengthAdjust="spacingAndGlyphs">2025.02.03 16:10:00</text>
<text class="c" x="299" textLength="38.8" lengthAdjust="spacingAndGlyphs">xauusd</text><text class="c" x="399" textLength="54" lengthAdjust="spacingAndGlyphs">912852224</text><text class="c" x="485" textLength="19" lengthAdjust="spacingAndGlyphs">buy</text><text class="c" x="628" textLength="20.4" lengthAdjust="spacingAndGlyphs">0.25</text><text class="c" x="771.4" textLength="39.2" lengthAdjust="spacingAndGlyphs">2813.05</text><text class="c" x="914" textLength="39" lengthAdjust="spacingAndGlyphs">2816.05</text><text class="c" x="1057" textLength="38.8" lengthAdjust="spacingAndGlyphs">2912.93</text><text class="c" x="1197.5" textLength="99.6" lengthAdjust="spacingAndGlyphs">2025.02.03 16:36:06</text><text class="c" x="1339.3" textLength="38.4" lengthAdjust="spacingAndGlyphs">2816.11</text><text class="c" x="1483" style="fill:#f00" textLength="26" lengthAdjust="spacingAndGlyphs">-1.76</text><text class="c" x="1810.2" style="fill:#00f" textLength="26.8" lengthAdjust="spacingAndGlyphs">76.50</text><text x="1876.7" font-size="13" fill="#00f" textLength="35" lengthAdjust="spacingAndGlyphs">0.11 %</text>
</g>
<g transform="translate(0,696.3)">
<rect x="18.5" y="-11" width="10.5" height="13.5" rx="2" fill="#fff" stroke="#1b6fb0" stroke-width="1.2"/><path d="M22 -7H25M22 -2.5H25" stroke="#1b6fb0"/>
<text x="35" font-size="13" fill="#111" textLength="99" lengthAdjust="spacingAndGlyphs">2025.02.03 16:10:00</text>
<text class="c" x="299" textLength="38.8" lengthAdjust="spacingAndGlyphs">xauusd</text><text class="c" x="399" textLength="54" lengthAdjust="spacingAndGlyphs">912852237</text><text class="c" x="485" textLength="19" lengthAdjust="spacingAndGlyphs">buy</text><text class="c" x="628" textLength="20.4" lengthAdjust="spacingAndGlyphs">0.25</text><text class="c" x="771.4" textLength="39.2" lengthAdjust="spacingAndGlyphs">2813.05</text><text class="c" x="914" textLength="39" lengthAdjust="spacingAndGlyphs">2816.05</text><text class="c" x="1057" textLength="38.8" lengthAdjust="spacingAndGlyphs">2912.93</text><text class="c" x="1197.5" textLength="99.6" lengthAdjust="spacingAndGlyphs">2025.02.03 16:36:06</text><text class="c" x="1339.3" textLength="38.4" lengthAdjust="spacingAndGlyphs">2816.11</text><text class="c" x="1483" style="fill:#f00" textLength="26" lengthAdjust="spacingAndGlyphs">-1.76</text><text class="c" x="1810.2" style="fill:#00f" textLength="26.8" lengthAdjust="spacingAndGlyphs">76.50</text><text x="1876.7" font-size="13" fill="#00f" textLength="35" lengthAdjust="spacingAndGlyphs">0.11 %</text>
</g>
<!-- footer -->
<circle cx="23.7" cy="712" r="4.8" fill="none" stroke="#222"/><path d="M21 712H26.4M23.7 709.3V714.7" stroke="#222"/>
<text class="b" x="35.5" y="716.3" textLength="75" lengthAdjust="spacingAndGlyphs">Profit: 373.70</text>
<text class="b" x="117.6" y="716.3" textLength="62.8" lengthAdjust="spacingAndGlyphs">Credit: 0.00</text>
<text class="b" x="187.8" y="716.3" textLength="71.8" lengthAdjust="spacingAndGlyphs">Deposit: 0.00</text>
<text class="b" x="266.5" y="716.3" textLength="93.5" lengthAdjust="spacingAndGlyphs">Withdrawal: 0.00</text>
<text class="b" x="366.5" y="716.3" textLength="86.5" lengthAdjust="spacingAndGlyphs">Balance: 373.70</text>
<text class="b" x="1454.6" y="716.3" textLength="28.4" lengthAdjust="spacingAndGlyphs">-8.80</text>
<text class="b" x="1772.6" y="716.3" textLength="37.6" lengthAdjust="spacingAndGlyphs">382.50</text>
</svg>
</body></html>
